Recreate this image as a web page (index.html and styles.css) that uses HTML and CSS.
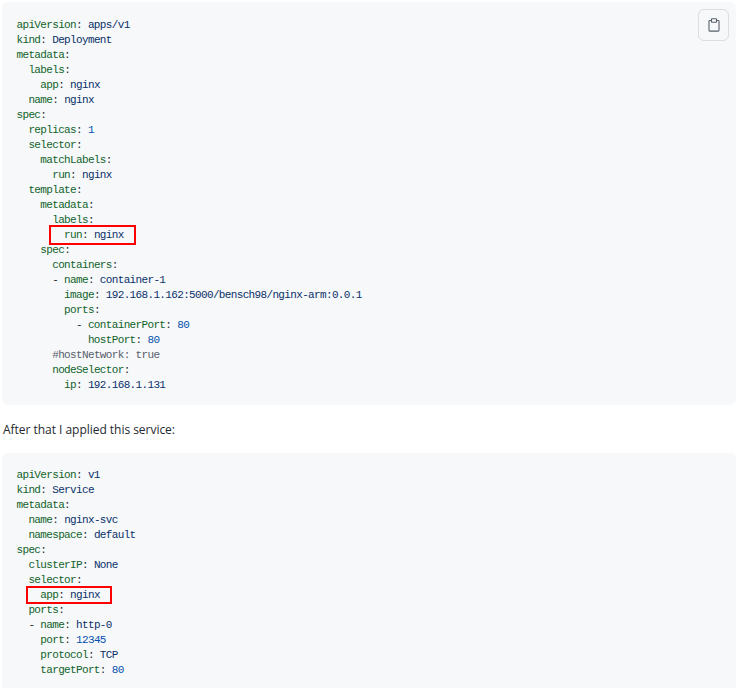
FILE: index.html
```html
<!DOCTYPE html>
<html lang="en">

<head>
    <meta charset="UTF-8">
    <title>After that I applied this service</title>
    <link rel="stylesheet" href="styles.css">
</head>

<body>

    <div class="codeblock forste">
        <button class="copy" aria-label="Copy">
            <svg width="16" height="16" viewBox="0 0 16 16" fill="none" stroke="#57606a" stroke-width="1.1">
                <path d="M5 3.500H3.800c-.5 0-.8.3-.8.8v9c0 .5.3.8.8.8h8.400c.5 0 .8-.3.8-.8v-9c0-.5-.3-.8-.8-.8H11"/>
                <rect x="5.500" y="1.700" width="5" height="3.600" rx=".5"/>
            </svg>
        </button>
        <div class="code">
            <div class="l"><span class="k">apiVersion</span>: <span class="s">apps/v1</span></div>
            <div class="l"><span class="k">kind</span>: <span class="s">Deployment</span></div>
            <div class="l"><span class="k">metadata</span>:</div>
            <div class="l">  <span class="k">labels</span>:</div>
            <div class="l">    <span class="k">app</span>: <span class="s">nginx</span></div>
            <div class="l">  <span class="k">name</span>: <span class="s">nginx</span></div>
            <div class="l"><span class="k">spec</span>:</div>
            <div class="l">  <span class="k">replicas</span>: <span class="n">1</span></div>
            <div class="l">  <span class="k">selector</span>:</div>
            <div class="l">    <span class="k">matchLabels</span>:</div>
            <div class="l">      <span class="k">run</span>: <span class="s">nginx</span></div>
            <div class="l">  <span class="k">template</span>:</div>
            <div class="l">    <span class="k">metadata</span>:</div>
            <div class="l">      <span class="k">labels</span>:</div>
            <div class="l">        <span class="hl"><span class="k">run</span>: <span class="s">nginx</span></span></div>
            <div class="l">    <span class="k">spec</span>:</div>
            <div class="l">      <span class="k">containers</span>:</div>
            <div class="l">      - <span class="k">name</span>: <span class="s">container-1</span></div>
            <div class="l">        <span class="k">image</span>: <span class="s">192.168.1.162:5000/bensch98/nginx-arm:0.0.1</span></div>
            <div class="l">        <span class="k">ports</span>:</div>
            <div class="l">          - <span class="k">containerPort</span>: <span class="n">80</span></div>
            <div class="l">            <span class="k">hostPort</span>: <span class="n">80</span></div>
            <div class="l">      <span class="c">#hostNetwork: true</span></div>
            <div class="l">      <span class="k">nodeSelector</span>:</div>
            <div class="l">        <span class="k">ip</span>: <span class="s">192.168.1.131</span></div>
        </div>
    </div>

    <p class="tekst">After that I applied this service:</p>

    <div class="codeblock">
        <div class="code">
            <div class="l"><span class="k">apiVersion</span>: <span class="s">v1</span></div>
            <div class="l"><span class="k">kind</span>: <span class="s">Service</span></div>
            <div class="l"><span class="k">metadata</span>:</div>
            <div class="l">  <span class="k">name</span>: <span class="s">nginx-svc</span></div>
            <div class="l">  <span class="k">namespace</span>: <span class="s">default</span></div>
            <div class="l"><span class="k">spec</span>:</div>
            <div class="l">  <span class="k">clusterIP</span>: <span class="s">None</span></div>
            <div class="l">  <span class="k">selector</span>:</div>
            <div class="l">    <span class="hl lav"><span class="k">app</span>: <span class="s">nginx</span></span></div>
            <div class="l">  <span class="k">ports</span>:</div>
            <div class="l">  - <span class="k">name</span>: <span class="s">http-0</span></div>
            <div class="l">    <span class="k">port</span>: <span class="n">12345</span></div>
            <div class="l">    <span class="k">protocol</span>: <span class="s">TCP</span></div>
            <div class="l">    <span class="k">targetPort</span>: <span class="n">80</span></div>
        </div>
    </div>

</body>

</html>
```

FILE: styles.css
```css
html {
    overflow: hidden;
}

body {
    margin: 0;
    padding: 2px 10px 0 2px;
    height: 686px;
    overflow: hidden;
    background-color: #fff;
}

.codeblock {
    position: relative;
    background-color: #f6f8fa;
    border-radius: 6px;
}

.code {
    padding: 15px 15px 15px 14.500px;
    font-family: "Liberation Mono", monospace;
    font-size: 11px;
    letter-spacing: -0.65px;
    line-height: 15px;
    color: #24292f;
}

.forste .code {
    padding-top: 16px;
    padding-bottom: 12px;
}

.l {
    height: 15px;
    white-space: pre;
}

.k {
    color: #116329;
}

.s {
    color: #0a3069;
}

.n {
    color: #0550ae;
}

.c {
    color: #57606a;
}

.hl {
    position: relative;
}

.hl::after {
    content: "";
    position: absolute;
    top: -4px;
    bottom: -4px;
    left: -15px;
    right: -12px;
    border: 2px solid #f00;
}

.hl.lav::after {
    top: -3px;
    bottom: -3px;
    left: -14px;
    right: -12px;
}

.copy {
    position: absolute;
    top: 7px;
    right: 7px;
    width: 31px;
    height: 32px;
    padding: 0;
    display: flex;
    align-items: center;
    justify-content: center;
    background-color: #f6f8fa;
    border: 1px solid #d8dee4;
    border-radius: 6px;
}

.tekst {
    margin: 16px 0 14px 1px;
    font-family: "Open Sans", sans-serif;
    font-size: 12px;
    letter-spacing: -0.03px;
    line-height: 18px;
    color: #24292f;
}
```
